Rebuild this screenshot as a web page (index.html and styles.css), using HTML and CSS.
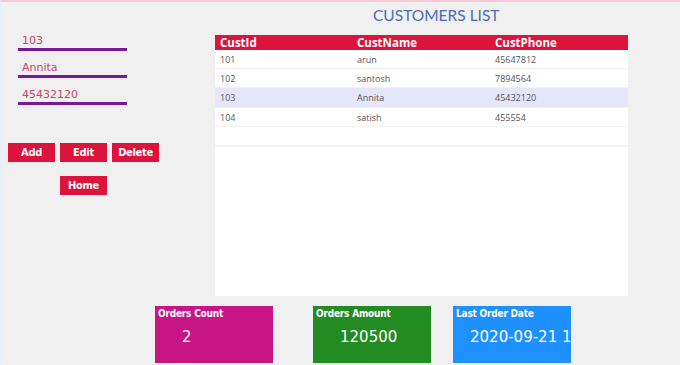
FILE: index.html
```html
<!DOCTYPE html>
<html>
<head>
<meta charset="utf-8">
<link rel="stylesheet" href="styles.css">
</head>
<body>
<div class="app">
  <div class="header"><h1 class="title">CUSTOMERS LIST</h1></div>
  <div class="main">
    <div class="left">
      <div class="field">103</div>
      <div class="field">Annita</div>
      <div class="field">45432120</div>
      <div class="btn-row">
        <button class="btn">Add</button>
        <button class="btn">Edit</button>
        <button class="btn">Delete</button>
      </div>
      <div class="btn-row home-row">
        <button class="btn">Home</button>
      </div>
    </div>
    <div class="grid">
      <div class="row head"><span>CustId</span><span>CustName</span><span>CustPhone</span></div>
      <div class="row"><span>101</span><span>arun</span><span>45647812</span></div>
      <div class="row"><span>102</span><span>santosh</span><span>7894564</span></div>
      <div class="row selected"><span>103</span><span>Annita</span><span>45432120</span></div>
      <div class="row"><span>104</span><span>satish</span><span>455554</span></div>
      <div class="row empty"></div>
    </div>
  </div>
  <div class="cards">
    <div class="card pink"><div class="card-label">Orders Count</div><div class="card-value v-count">2</div></div>
    <div class="card green"><div class="card-label">Orders Amount</div><div class="card-value v-amount">120500</div></div>
    <div class="card blue"><div class="card-label">Last Order Date</div><div class="card-value v-date">2020-09-21 1</div></div>
  </div>
</div>
</body>
</html>
```
FILE: styles.css
```css
html, body {
  margin: 0;
  padding: 0;
}
body {
  width: 680px;
  height: 365px;
  overflow: hidden;
  background: #f0f0f0;
  font-family: "DejaVu Sans", sans-serif;
}
.app {
  height: 363px;
  border-top: 2px solid #f6c9d4;
  border-left: 1px solid #e3eef6;
  box-sizing: border-box;
  display: flex;
  flex-direction: column;
}
.header {
  height: 33px;
  padding-left: 372px;
  box-sizing: border-box;
}
.title {
  margin: 0;
  padding-top: 4px;
  font-family: "Lato", sans-serif;
  font-weight: 400;
  font-size: 15.5px;
  color: #4a6cb3;
}
.main {
  display: flex;
  height: 261px;
}
.left {
  width: 214px;
  box-sizing: border-box;
}
.field {
  margin-left: 17px;
  width: 105px;
  height: 13px;
  padding: 0 0 0 4px;
  margin-bottom: 11px;
  box-sizing: content-box;
  border-bottom: 3px solid #76199a;
  font-family: "DejaVu Sans", sans-serif;
  font-size: 11px;
  line-height: 11px;
  color: #c4476f;
}
.btn-row {
  display: flex;
  gap: 5px;
  margin-left: 7px;
  margin-top: 38px;
}
.home-row {
  margin-left: 59px;
  margin-top: 14px;
}
.btn {
  width: 47px;
  height: 19px;
  padding: 0;
  border: none;
  background: #dc143c;
  color: #fff;
  font-family: "DejaVu Sans Condensed", "DejaVu Sans", sans-serif;
  font-weight: bold;
  font-size: 11px;
  letter-spacing: -0.3px;
}
.grid {
  width: 413px;
  height: 261px;
  background: #fff;
}
.row {
  display: grid;
  grid-template-columns: 137px 138px 133px;
  height: 19px;
  align-items: center;
  border-bottom: 1px solid #f1f1f1;
  box-sizing: border-box;
  padding-left: 5px;
  font-family: "Open Sans", sans-serif;
  font-size: 9px;
  color: #555;
}
.row.head {
  height: 15px;
  background: #dc143c;
  color: #fff;
  font-weight: bold;
  font-size: 11.5px;
  border-bottom: none;
}
.row.selected {
  background: #e6e6fa;
  height: 20px;
}
.row.empty {
  height: 20px;
  border-bottom: 2px solid #f3f3f3;
}
.cards {
  display: flex;
  margin-top: 10px;
  margin-left: 154px;
}
.card {
  width: 118px;
  height: 57px;
  box-sizing: border-box;
  color: #fff;
  padding: 2px 3px;
}
.pink { background: #c71585; }
.green { background: #228b22; margin-left: 40px; }
.blue { background: #1e90ff; margin-left: 22px; overflow: hidden; white-space: nowrap; }
.card-label {
  font-family: "DejaVu Sans Condensed", "DejaVu Sans", sans-serif;
  font-weight: bold;
  font-size: 10px;
  letter-spacing: -0.2px;
}
.card-value {
  font-family: "DejaVu Sans", sans-serif;
  font-size: 15px;
  margin-top: 9px;
}
.v-count { padding-left: 24px; }
.v-amount { padding-left: 24px; }
.v-date { padding-left: 14px; }
```
